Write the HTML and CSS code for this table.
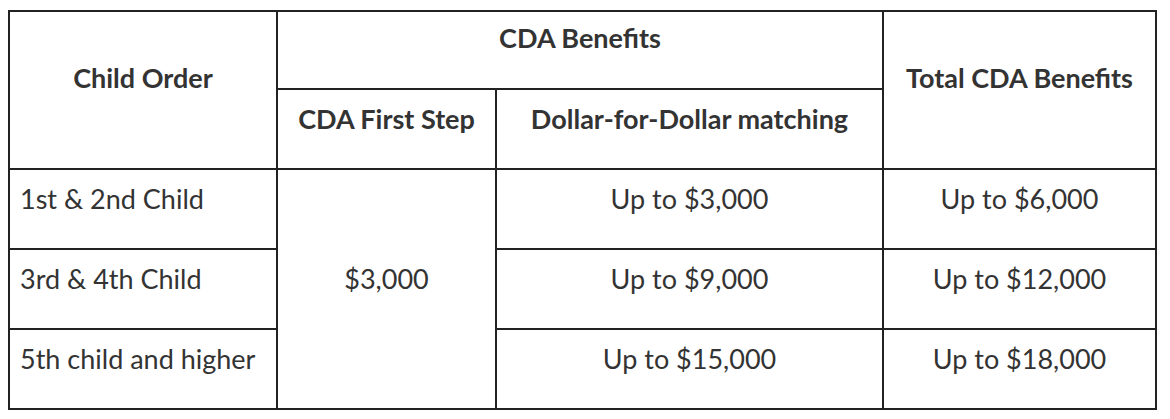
FILE: index.html
```html
<!DOCTYPE html>
<html>
<head>
<meta charset="utf-8">
<link rel="stylesheet" href="styles.css">
</head>
<body>
<table class="cda">
  <colgroup>
    <col class="c1"><col class="c2"><col class="c3"><col class="c4">
  </colgroup>
  <tr class="h1">
    <th rowspan="2" class="hd">Child Order</th>
    <th colspan="2" class="hd">CDA Benefits</th>
    <th rowspan="2" class="hd">Total CDA Benefits</th>
  </tr>
  <tr class="h2">
    <th class="hd">CDA First Step</th>
    <th class="hd">Dollar-for-Dollar matching</th>
  </tr>
  <tr class="r">
    <td class="lbl">1st &amp; 2nd Child</td>
    <td rowspan="3" class="num">$3,000</td>
    <td class="num">Up to $3,000</td>
    <td class="num">Up to $6,000</td>
  </tr>
  <tr class="r">
    <td class="lbl">3rd &amp; 4th Child</td>
    <td class="num">Up to $9,000</td>
    <td class="num">Up to $12,000</td>
  </tr>
  <tr class="r">
    <td class="lbl">5th child and higher</td>
    <td class="num">Up to $15,000</td>
    <td class="num">Up to $18,000</td>
  </tr>
</table>
</body>
</html>
```

FILE: styles.css
```css
html, body {
  margin: 0;
  background: #ffffff;
}
body {
  padding: 10px 0 0 8px;
  font-family: Lato, "Open Sans", sans-serif;
  color: #333333;
}
.cda {
  border-collapse: collapse;
  table-layout: fixed;
  width: 1147px;
}
.c1 { width: 268px; }
.c2 { width: 219px; }
.c3 { width: 387px; }
.c4 { width: 273px; }
.cda th, .cda td {
  border: 2px solid #222222;
  padding: 0 10px 20px 10px;
  vertical-align: middle;
  font-size: 27px;
  line-height: 32px;
  text-align: center;
}
.cda th {
  font-weight: 700;
}
.h1 { height: 78px; }
.h2 { height: 80px; }
.h1 th { padding-bottom: 24px; }
.r { height: 80px; }
.cda td.lbl {
  text-align: left;
  padding-left: 10px;
}
```
